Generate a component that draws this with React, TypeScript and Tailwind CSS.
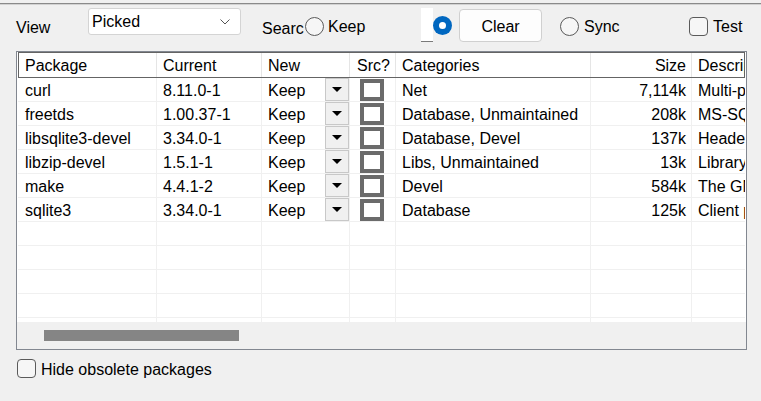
import React from "react";

type Row = {
  name: string;
  current: string;
  categories: string;
  size: string;
  desc: string;
};

const rows: Row[] = [
  { name: "curl", current: "8.11.0-1", categories: "Net", size: "7,114k", desc: "Multi-protocol file transfer tool" },
  { name: "freetds", current: "1.00.37-1", categories: "Database, Unmaintained", size: "208k", desc: "MS-SQL and Sybase client library" },
  { name: "libsqlite3-devel", current: "3.34.0-1", categories: "Database, Devel", size: "137k", desc: "Header files for SQLite" },
  { name: "libzip-devel", current: "1.5.1-1", categories: "Libs, Unmaintained", size: "13k", desc: "Library for zip archives" },
  { name: "make", current: "4.4.1-2", categories: "Devel", size: "584k", desc: "The GNU version of make" },
  { name: "sqlite3", current: "3.34.0-1", categories: "Database", size: "125k", desc: "Client program for SQLite" },
];

function Radio({ checked = false }: { checked?: boolean }) {
  if (checked) {
    return (
      <div className="w-[19px] h-[19px] rounded-full bg-[#0067c0] flex items-center justify-center">
        <div className="w-[7px] h-[7px] rounded-full bg-white" />
      </div>
    );
  }
  return <div className="w-[19px] h-[19px] rounded-full border border-[#5a5a5a] bg-[#f6f6f6]" />;
}

function Check() {
  return <div className="w-[19px] h-[19px] rounded-[4px] border border-[#5a5a5a] bg-[#f6f6f6]" />;
}

function DropButton() {
  return (
    <div className="ml-auto w-[24px] h-[23px] bg-[#f0f0f0] border border-[#c8c8c8] flex items-center justify-center">
      <svg width="10" height="5" viewBox="0 0 10 5">
        <polygon points="0,0 10,0 5,5" fill="#000" />
      </svg>
    </div>
  );
}

function BodyRow({ row }: { row?: Row }) {
  return (
    <div className="flex h-[24px] border-b border-[#f0f0f0] w-[727px]">
      <div className="w-[139px] flex-none border-r border-[#f0f0f0] pl-[7px] flex items-center pt-[2px] whitespace-nowrap">
        {row?.name}
      </div>
      <div className="w-[105px] flex-none border-r border-[#f0f0f0] pl-[6px] flex items-center pt-[2px] whitespace-nowrap">
        {row?.current}
      </div>
      <div className="w-[88px] flex-none border-r border-[#f0f0f0] pl-[6px] flex items-center whitespace-nowrap">
        {row && (
          <>
            <span className="pt-[2px]">Keep</span>
            <DropButton />
          </>
        )}
      </div>
      <div className="w-[46px] flex-none border-r border-[#f0f0f0] pl-[10px] flex items-center">
        {row && <div className="w-[24px] h-[22px] border-[4px] border-[#6b6b6b] bg-white mt-px" />}
      </div>
      <div className="w-[195px] flex-none border-r border-[#f0f0f0] pl-[6px] flex items-center pt-[2px] whitespace-nowrap">
        {row?.categories}
      </div>
      <div className="w-[101px] flex-none border-r border-[#f0f0f0] pr-[5px] flex items-center justify-end pt-[2px] whitespace-nowrap">
        {row?.size}
      </div>
      <div className="flex-1 min-w-0 overflow-hidden pl-[6px] flex items-center pt-[2px] whitespace-nowrap">
        {row?.desc}
      </div>
    </div>
  );
}

export default function App() {
  return (
    <div className="w-[761px] h-[401px] bg-[#f0f0f0] overflow-hidden text-[16px] leading-[19px] text-black font-['Liberation_Sans',Arial,sans-serif]">
      <div className="pt-[3px]">
        <div className="h-px bg-[#8a8a8a]" />
        <div className="h-px bg-[#d2d2d2]" />
      </div>

      {/* toolbar */}
      <div className="flex items-start h-[46px]">
        <div className="w-[88px] flex-none pl-[16px] mt-[13px]">View</div>
        <div className="w-[153px] h-[27px] flex-none mt-[3px] bg-white border border-[#d4d4d4] rounded-[3px] flex items-center pl-[3px] pr-[10px]">
          <span>Picked</span>
          <svg className="ml-auto" width="10" height="6" viewBox="0 0 10 6">
            <polyline points="0.5,0.5 5,5 9.5,0.5" fill="none" stroke="#555" strokeWidth="1" />
          </svg>
        </div>
        <div className="ml-[21px] w-[43px] flex-none mt-[14px] whitespace-nowrap">Searc</div>
        <div className="flex-none mt-[12px]">
          <Radio />
        </div>
        <div className="ml-[4px] w-[93px] flex-none mt-[12px]">Keep</div>
        <div className="w-[12px] h-[34px] flex-none mt-[3px] bg-white border-b border-[#7a7a7a]" />
        <div className="flex-none mt-[11px]">
          <Radio checked />
        </div>
        <button className="ml-[7px] w-[83px] h-[33px] flex-none mt-[4px] bg-[#fdfdfd] border border-[#d0d0d0] rounded-[4px] flex items-center justify-center pt-px">
          Clear
        </button>
        <div className="ml-[18px] flex-none mt-[12px]">
          <Radio />
        </div>
        <div className="ml-[5px] w-[105px] flex-none mt-[12px]">Sync</div>
        <div className="flex-none mt-[12px]">
          <Check />
        </div>
        <div className="ml-[5px] flex-none mt-[12px]">Test</div>
      </div>

      {/* package list */}
      <div className="ml-[16px] w-[731px] h-[299px] border border-[#828790] bg-white flex flex-col">
        <div className="h-[270px] overflow-hidden pl-px flex-none">
          <div className="flex h-[26px] w-[727px] border border-[#646464]">
            <div className="w-[138px] flex-none border-r border-[#e5e5e5] pl-[6px] flex items-center pt-px">Package</div>
            <div className="w-[105px] flex-none border-r border-[#e5e5e5] pl-[6px] flex items-center pt-px">Current</div>
            <div className="w-[88px] flex-none border-r border-[#e5e5e5] pl-[6px] flex items-center pt-px">New</div>
            <div className="w-[46px] flex-none border-r border-[#e5e5e5] pl-[7px] flex items-center pt-px">Src?</div>
            <div className="w-[195px] flex-none border-r border-[#e5e5e5] pl-[6px] flex items-center pt-px">Categories</div>
            <div className="w-[101px] flex-none border-r border-[#e5e5e5] pr-[5px] flex items-center justify-end pt-px">Size</div>
            <div className="flex-1 min-w-0 overflow-hidden pl-[6px] flex items-center pt-px whitespace-nowrap">Description</div>
          </div>
          {rows.map((r) => (
            <BodyRow key={r.name} row={r} />
          ))}
          {[0, 1, 2, 3, 4].map((i) => (
            <BodyRow key={"e" + i} />
          ))}
        </div>
        <div className="flex-1 bg-[#f0f0f0] pt-[8px] pl-[27px]">
          <div className="w-[195px] h-[11px] bg-[#858585]" />
        </div>
      </div>

      <div className="ml-[17px] mt-[8px] flex items-center">
        <Check />
        <span className="ml-[5px] pt-[2px]">Hide obsolete packages</span>
      </div>
    </div>
  );
}
